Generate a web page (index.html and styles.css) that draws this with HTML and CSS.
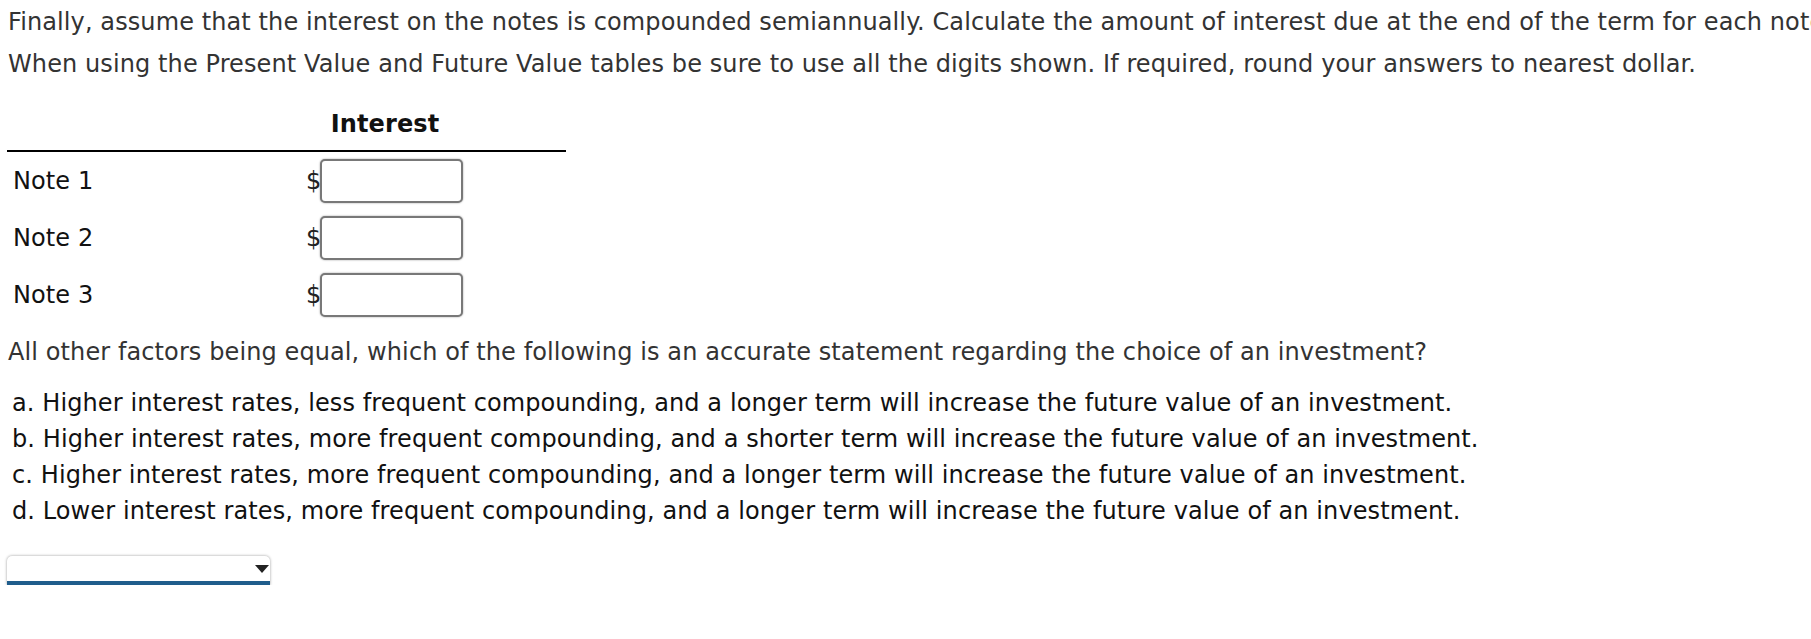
FILE: index.html
```html
<!DOCTYPE html>
<html>
<head>
<meta charset="utf-8">
<link rel="stylesheet" href="styles.css">
</head>
<body>
<div class="page">
  <p class="intro">Finally, assume that the interest on the notes is compounded semiannually. Calculate the amount of interest due at the end of the term for each note.<br>When using the Present Value and Future Value tables be sure to use all the digits shown. If required, round your answers to nearest dollar.</p>

  <div class="table">
    <div class="head">
      <div class="head-label"></div>
      <div class="head-col">Interest</div>
    </div>
    <div class="row">
      <div class="label">Note 1</div>
      <div class="cell"><span class="cur">$</span><span class="input"></span></div>
    </div>
    <div class="row">
      <div class="label">Note 2</div>
      <div class="cell"><span class="cur">$</span><span class="input"></span></div>
    </div>
    <div class="row">
      <div class="label">Note 3</div>
      <div class="cell"><span class="cur">$</span><span class="input"></span></div>
    </div>
  </div>

  <p class="question">All other factors being equal, which of the following is an accurate statement regarding the choice of an investment?</p>
  <div class="options">
    <div class="opt">a. Higher interest rates, less frequent compounding, and a longer term will increase the future value of an investment.</div>
    <div class="opt">b. Higher interest rates, more frequent compounding, and a shorter term will increase the future value of an investment.</div>
    <div class="opt">c. Higher interest rates, more frequent compounding, and a longer term will increase the future value of an investment.</div>
    <div class="opt">d. Lower interest rates, more frequent compounding, and a longer term will increase the future value of an investment.</div>
  </div>

  <div class="select"><span class="arrow"></span></div>
</div>
</body>
</html>
```

FILE: styles.css
```css
html, body {
  margin: 0;
  padding: 0;
  background: #ffffff;
  overflow: hidden;
}
body {
  font-family: "DejaVu Sans", Verdana, sans-serif;
  font-size: 24px;
  letter-spacing: 0.1px;
  color: #000;
}
.page {
  padding: 0 0 0 8px;
  width: 2200px;
}
.intro {
  margin: 0;
  padding-top: 1px;
  line-height: 42px;
  color: #333;
  white-space: nowrap;
}
.table {
  width: 559px;
  margin-left: -1px;
  margin-top: 25px;
}
.head {
  display: flex;
  border-bottom: 2px solid #000;
  height: 40px;
  align-items: flex-start;
}
.head-label {
  width: 299px;
}
.head-col {
  width: 158px;
  text-align: center;
  font-weight: bold;
  color: #111;
}
.row {
  display: flex;
  align-items: center;
  height: 57px;
}
.row:first-of-type {
  margin-top: 7px;
}
.label {
  width: 299px;
  padding-left: 6px;
  box-sizing: border-box;
  color: #111;
}
.cell {
  display: flex;
  align-items: center;
}
.cur {
  width: 14px;
  color: #222;
}
.input {
  width: 139px;
  height: 40px;
  border: 2px solid #787878;
  border-radius: 5px;
  box-shadow: 0 0 2px rgba(0, 0, 0, 0.4);
  background: #fff;
}
.question {
  margin: 0;
  margin-top: 11px;
  line-height: 36px;
  color: #333;
}
.options {
  margin-top: 15px;
  padding-left: 4px;
  line-height: 36px;
  color: #111;
}
.select {
  position: relative;
  margin-top: 27px;
  margin-left: -1px;
  width: 263px;
  height: 25px;
  background: #fff;
  border-radius: 5px 5px 0 0;
  box-shadow: 0 0 3px rgba(0, 0, 0, 0.4);
  border-bottom: 4px solid #1f5d8c;
}
.arrow {
  position: absolute;
  right: 1px;
  top: 9px;
  width: 0;
  height: 0;
  border-left: 7px solid transparent;
  border-right: 7px solid transparent;
  border-top: 8px solid #222;
}
```
